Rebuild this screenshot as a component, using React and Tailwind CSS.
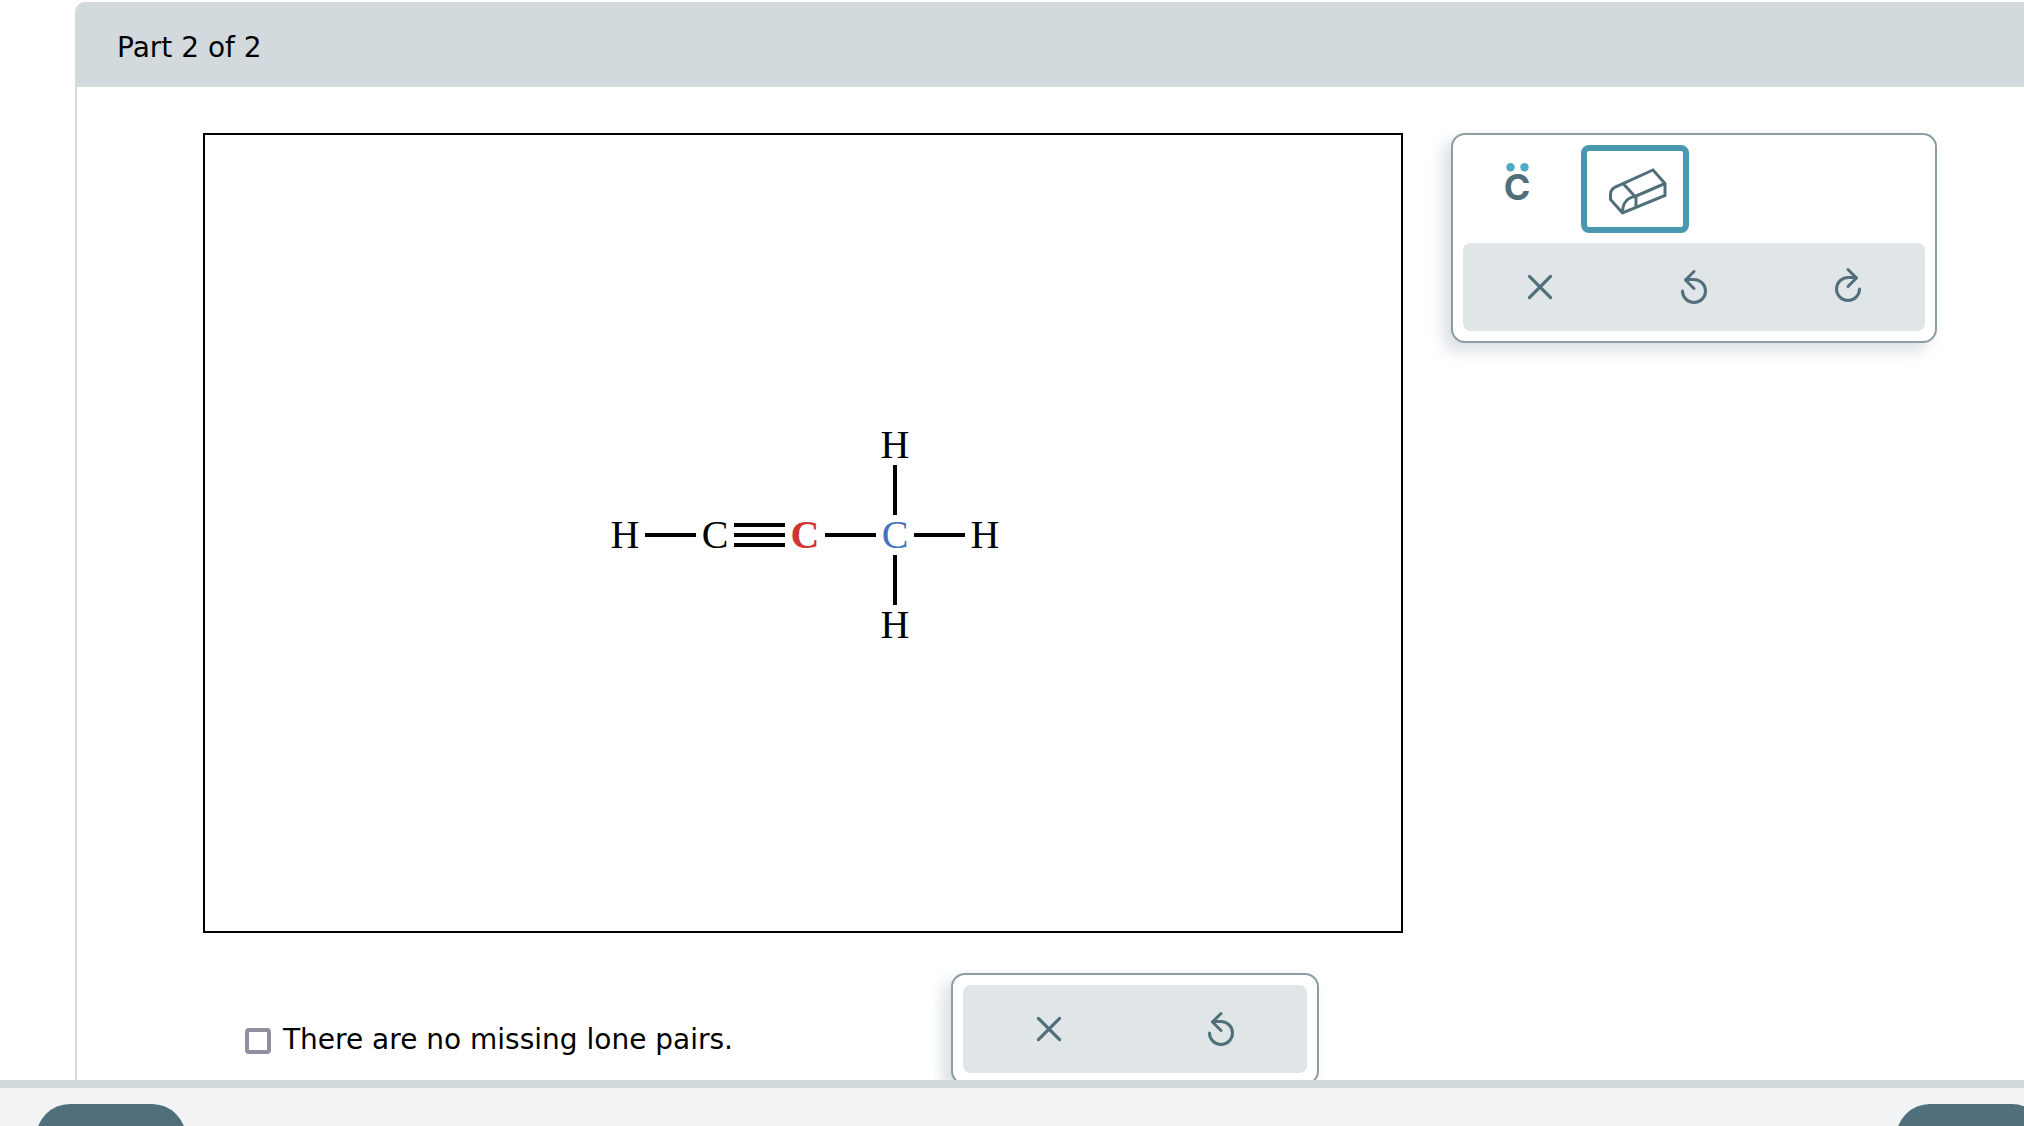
import { useState } from 'react';

const HORIZONTAL_BONDS = [
  { x: 440, y: 398 },
  { x: 529, y: 388 },
  { x: 529, y: 398 },
  { x: 529, y: 408 },
  { x: 620, y: 398 },
  { x: 709, y: 398 }
];

const VERTICAL_BONDS = [
  { x: 688, y: 330 },
  { x: 688, y: 420 }
];

const ATOMS = [
  { label: 'H', x: 420, y: 413 },
  { label: 'C', x: 510, y: 413 },
  { label: 'C', x: 600, y: 413, className: 'fill-[#cf3533] font-bold' },
  { label: 'C', x: 690, y: 413, className: 'fill-[#4472bd]' },
  { label: 'H', x: 780, y: 413 },
  { label: 'H', x: 690, y: 323 },
  { label: 'H', x: 690, y: 503 }
];

function ClearIcon() {
  return (
    <svg className="w-11 h-11" viewBox="0 0 44 44" fill="none" stroke="currentColor" strokeWidth="3.2" strokeLinecap="round">
      <path d="M11.4 11.4l21.2 21.2M32.6 11.4L11.4 32.6" />
    </svg>
  );
}

function UndoIcon() {
  return (
    <svg className="w-11 h-11" viewBox="0 0 44 44" fill="none" stroke="currentColor" strokeWidth="3" strokeLinecap="round" strokeLinejoin="round">
      <path d="M22 6.5L13.5 15l8.5 8.5" />
      <path d="M14 14.5h8a11.5 11.5 0 1 1-11.5 11.5" />
    </svg>
  );
}

function RedoIcon() {
  return (
    <svg className="w-11 h-11" viewBox="0 0 44 44" fill="none" stroke="currentColor" strokeWidth="3" strokeLinecap="round" strokeLinejoin="round">
      <path d="M22 4.5l8.5 8.5-8.5 8.5" />
      <path d="M30 12.5h-8a11.5 11.5 0 1 0 11.5 11.5" />
    </svg>
  );
}

function LonePairIcon() {
  return (
    <svg className="w-16 h-[52px]" viewBox="0 0 64 52">
      <circle cx="25.5" cy="4.200" r="4.2" fill="#50a9c4" />
      <circle cx="39.5" cy="4.200" r="4.2" fill="#50a9c4" />
      <text x="32" y="37" textAnchor="middle" fill="currentColor" className="font-['Inter',sans-serif] font-bold text-[36px]">C</text>
    </svg>
  );
}

function EraserIcon() {
  return (
    <svg className="w-16 h-[52px]" viewBox="0 0 64 52" fill="none" stroke="currentColor" strokeWidth="3">
      <path d="M50 7L62 20.5v12L19.5 50 7.5 36.5V31c0-3.5 3-6.5 7-8z" />
      <path d="M20.5 21L33 34.5v10M62 20.5L32 33.5c-7 1-12.5 6-12.5 16" />
    </svg>
  );
}

function ToolPanel({ children, className = '' }) {
  return (
    <div className={`flex flex-col gap-2.5 p-2.5 bg-white border-2 border-[#8d9da2] rounded-[14px] text-[#506f7a] shadow-[-8px_8px_16px_rgba(80,111,122,0.22)] ${className}`}>
      {children}
    </div>
  );
}

function ActionBar({ actions }) {
  return (
    <div className="flex h-[88px] bg-[#e0e5e7] rounded-lg">
      {actions.map(({ label, icon: Icon }) => (
        <button key={label} type="button" aria-label={label} className="flex-1 flex items-center justify-center">
          <Icon />
        </button>
      ))}
    </div>
  );
}

const CLEAR = { label: 'Clear', icon: ClearIcon };
const UNDO = { label: 'Undo', icon: UndoIcon };
const REDO = { label: 'Redo', icon: RedoIcon };

export default function App() {
  const [tool, setTool] = useState('eraser');
  const [noneMissing, setNoneMissing] = useState(false);

  const tools = [
    { id: 'lone-pair', label: 'Add lone pair', icon: LonePairIcon },
    { id: 'eraser', label: 'Eraser', icon: EraserIcon }
  ];

  return (
    <div className="h-screen flex flex-col overflow-hidden bg-white text-black font-['DejaVu_Sans',sans-serif] text-[28px] leading-9">
      <main className="flex-1 min-h-0 overflow-hidden pt-0.5 pl-[75px]">
        <section className="min-h-full border-l-2 border-[#d3dadd] rounded-tl-[10px]">
          <h2 className="h-[85px] flex items-center pl-10 pt-1.5 bg-[#d3dadd] rounded-tl-lg">Part 2 of 2</h2>

          <div className="flex items-start gap-12 pt-[46px] pl-[126px] pr-[87px]">
            <div className="flex-1 min-w-0">
              <div className="aspect-3/2 border-2 border-black">
                <svg className="w-full h-full" viewBox="0 0 1196 796" role="img" aria-label="Propyne structure">
                  {HORIZONTAL_BONDS.map((b) => (
                    <rect key={`${b.x}-${b.y}`} x={b.x} y={b.y} width="51" height="4" />
                  ))}
                  {VERTICAL_BONDS.map((b) => (
                    <rect key={`${b.x}-${b.y}`} x={b.x} y={b.y} width="4" height="50" />
                  ))}
                  <g textAnchor="middle" className="font-['Liberation_Serif',serif] text-[40px]">
                    {ATOMS.map((a) => (
                      <text key={`${a.x}-${a.y}`} x={a.x} y={a.y} className={a.className}>{a.label}</text>
                    ))}
                  </g>
                </svg>
              </div>

              <div className="flex items-start justify-between mt-10 pl-[42px] pr-[84px]">
                <label className="flex items-end gap-3 pt-[49px]">
                  <input
                    type="checkbox"
                    checked={noneMissing}
                    onChange={(e) => setNoneMissing(e.target.checked)}
                    className="appearance-none w-[26px] h-[26px] mb-1 border-4 border-[#8f8f9d] rounded bg-white checked:bg-[#4a98af]"
                  />
                  <span>There are no missing lone pairs.</span>
                </label>
                <ToolPanel className="w-[368px]">
                  <ActionBar actions={[CLEAR, UNDO]} />
                </ToolPanel>
              </div>
            </div>

            <ToolPanel className="w-[486px] shrink-0">
              <div className="flex gap-2.5">
                {tools.map(({ id, label, icon: Icon }) => (
                  <button
                    key={id}
                    type="button"
                    aria-label={label}
                    aria-pressed={tool === id}
                    onClick={() => setTool(id)}
                    className={`w-[108px] h-[88px] flex items-center justify-center border-6 rounded-lg ${tool === id ? 'border-[#4a98af]' : 'border-transparent'}`}
                  >
                    <Icon />
                  </button>
                ))}
              </div>
              <ActionBar actions={[CLEAR, UNDO, REDO]} />
            </ToolPanel>
          </div>
        </section>
      </main>

      <footer className="h-[46px] shrink-0 flex items-start justify-between overflow-hidden px-9 pt-4 -mr-[58px] border-t-8 border-[#d3dadd] bg-[#f1f3f4]">
        <button type="button" aria-label="Continue" className="w-[150px] h-[68px] shrink-0 rounded-full bg-[#506f7a]" />
        <button type="button" aria-label="Submit" className="w-[150px] h-[68px] shrink-0 rounded-full bg-[#506f7a]" />
      </footer>
    </div>
  );
}
